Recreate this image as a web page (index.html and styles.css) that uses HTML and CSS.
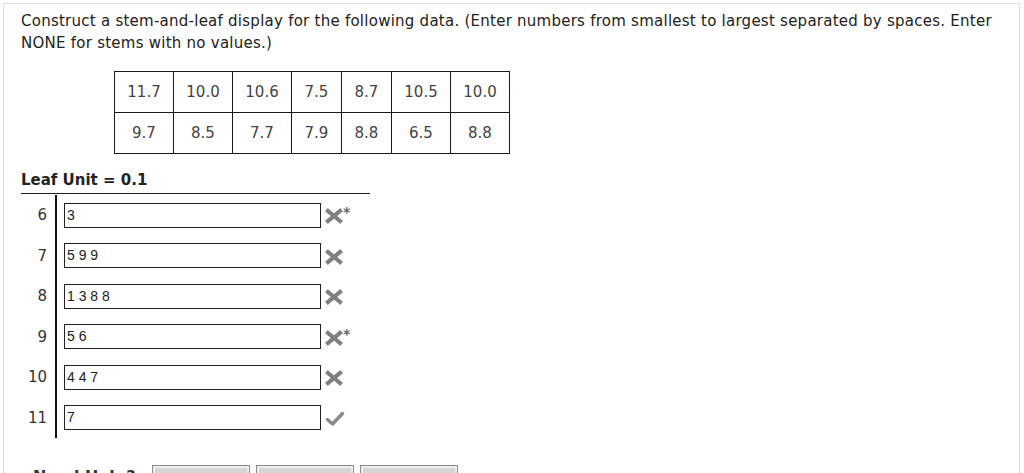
FILE: index.html
```html
<!DOCTYPE html>
<html>
<head>
<meta charset="utf-8">
<link rel="stylesheet" href="styles.css">
</head>
<body>
<div class="frame">
  <p class="prompt">Construct a stem-and-leaf display for the following data. (Enter numbers from smallest to largest separated by spaces. Enter NONE for stems with no values.)</p>
  <table class="data">
    <tr><td>11.7</td><td>10.0</td><td>10.6</td><td class="n">7.5</td><td class="n">8.7</td><td>10.5</td><td>10.0</td></tr>
    <tr><td>9.7</td><td>8.5</td><td>7.7</td><td class="n">7.9</td><td class="n">8.8</td><td>6.5</td><td>8.8</td></tr>
  </table>
  <div class="leafunit">Leaf Unit = 0.1</div>
  <div class="plot">
    <div class="row"><span class="stem">6</span><span class="leaf"><span class="box">3</span><span class="mark"><svg viewBox="0 0 18 16" class="x"><path d="M3 3 L15 13 M15 3 L3 13"/></svg><span class="ast">*</span></span></span></div>
    <div class="row"><span class="stem">7</span><span class="leaf"><span class="box">5 9 9</span><span class="mark"><svg viewBox="0 0 18 16" class="x"><path d="M3 3 L15 13 M15 3 L3 13"/></svg></span></span></div>
    <div class="row"><span class="stem">8</span><span class="leaf"><span class="box">1 3 8 8</span><span class="mark"><svg viewBox="0 0 18 16" class="x"><path d="M3 3 L15 13 M15 3 L3 13"/></svg></span></span></div>
    <div class="row"><span class="stem">9</span><span class="leaf"><span class="box">5 6</span><span class="mark"><svg viewBox="0 0 18 16" class="x"><path d="M3 3 L15 13 M15 3 L3 13"/></svg><span class="ast">*</span></span></span></div>
    <div class="row"><span class="stem">10</span><span class="leaf"><span class="box">4 4 7</span><span class="mark"><svg viewBox="0 0 18 16" class="x"><path d="M3 3 L15 13 M15 3 L3 13"/></svg></span></span></div>
    <div class="row"><span class="stem">11</span><span class="leaf"><span class="box">7</span><span class="mark"><svg viewBox="0 0 20 16" class="chk"><path d="M2.5 8.5 L7.5 13 L17.5 2.5"/></svg></span></span></div>
  </div>
  <div class="help"><span class="helptext">Need Help?</span><span class="btn"></span><span class="btn"></span><span class="btn"></span></div>
</div>
</body>
</html>
```

FILE: styles.css
```css
html, body {
  margin: 0;
  padding: 0;
  background: #fff;
  overflow: hidden;
}
.frame {
  margin: 3px 3px 0 3px;
  width: 1017px;
  height: 480px;
  border-left: 1px solid #dcdcdc;
  border-top: 1px solid #dcdcdc;
  border-right: 1px solid #dcdcdc;
  box-sizing: border-box;
  padding: 6px 0 0 17px;
  font-family: "DejaVu Sans", Verdana, sans-serif;
  color: #222;
}
.prompt {
  margin: 0;
  font-size: 15px;
  letter-spacing: 0.25px;
  line-height: 22px;
  width: 990px;
}
.data {
  border-collapse: collapse;
  margin: 17px 0 0 93px;
}
.data td {
  border: 1.5px solid #1a1a1a;
  width: 58px;
  height: 40px;
  padding: 0;
  text-align: center;
  font-size: 15px;
  color: #444;
}
.data td.n {
  width: 49px;
}
.leafunit {
  margin-top: 17px;
  font-weight: bold;
  font-size: 15px;
  line-height: 18px;
  color: #222;
}
.plot {
  margin-top: 4px;
  width: 349px;
  border-top: 1px solid #222;
  padding-top: 1px;
}
.row {
  display: flex;
  height: 40.5px;
}
.stem {
  width: 26px;
  text-align: right;
  padding-right: 8px;
  font-size: 15px;
  line-height: 40.5px;
  color: #333;
}
.leaf {
  display: flex;
  align-items: center;
  border-left: 2px solid #111;
  padding-left: 7px;
}
.box {
  box-sizing: border-box;
  width: 257px;
  height: 25px;
  border: 1.5px solid #222;
  font-family: "Liberation Sans", Arial, sans-serif;
  font-size: 14px;
  line-height: 22px;
  padding-left: 2px;
  color: #222;
  white-space: pre;
}
.mark {
  display: flex;
  align-items: flex-start;
  margin-left: 4px;
  height: 18px;
}
.x {
  width: 18px;
  height: 16px;
  margin-top: 2px;
}
.x path {
  stroke: #808080;
  stroke-width: 4.2;
  stroke-linecap: square;
  fill: none;
}
.chk {
  width: 20px;
  height: 16px;
  margin-top: 2px;
}
.chk path {
  stroke: #8a8a8a;
  stroke-width: 3.5;
  stroke-linecap: round;
  stroke-linejoin: round;
  fill: none;
}
.ast {
  font-size: 14px;
  line-height: 13px;
  color: #666;
  font-weight: bold;
  margin-left: 0;
}
.help {
  display: flex;
  align-items: flex-start;
  margin-top: 27px;
  padding-left: 12px;
}
.helptext {
  font-weight: bold;
  font-size: 16px;
  color: #333;
  width: 119px;
  line-height: 20px;
  padding-top: 2px;
}
.btn {
  box-sizing: border-box;
  width: 98px;
  height: 24px;
  border: 1px solid #888;
  background: #d6d6d6;
  box-shadow: inset 0 0 0 2px #eee;
  margin-right: 6px;
}
```
